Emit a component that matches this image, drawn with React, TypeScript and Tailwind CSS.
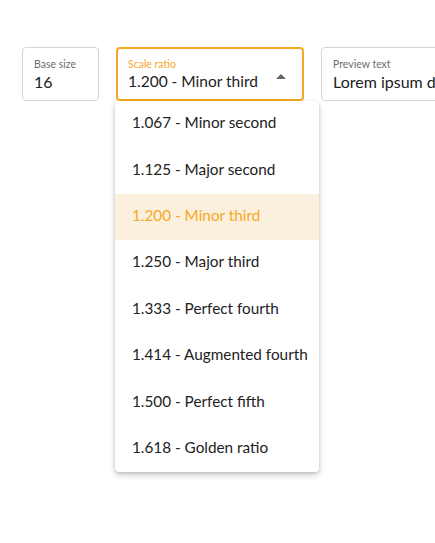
import React from 'react';

const options = [
  '1.067 - Minor second',
  '1.125 - Major second',
  '1.200 - Minor third',
  '1.250 - Major third',
  '1.333 - Perfect fourth',
  '1.414 - Augmented fourth',
  '1.500 - Perfect fifth',
  '1.618 - Golden ratio',
];

const App = () => {
  const selected = '1.200 - Minor third';
  return (
    <div className="w-[435px] h-[543px] overflow-hidden bg-white font-['Lato',sans-serif] text-[#222]">
      <div className="flex pl-[22px] pt-[47px]">
        {/* Base size */}
        <div className="w-[77px] h-[54px] shrink-0 rounded-[4px] border border-[#d6d6d6] px-[11px] pt-[9px]">
          <div className="text-[10.5px] leading-[14px] text-[#6e6e6e]">Base size</div>
          <div className="text-[16px] leading-[21px]">16</div>
        </div>

        {/* Scale ratio select */}
        <div className="relative ml-[17px] w-[188px] h-[54px] shrink-0">
          <div className="h-full rounded-[4px] border-2 border-[#f7a823] pl-[10px] pr-3 pt-[8px] flex">
            <div className="flex-1">
              <div className="text-[10.5px] leading-[14px] text-[#f7a823]">Scale ratio</div>
              <div className="text-[15.5px] leading-[21px]">{selected}</div>
            </div>
            <svg width="10" height="5" viewBox="0 0 10 5" className="mt-[17px] mr-[4px]">
              <path d="M0 5 L5 0 L10 5 Z" fill="#666" />
            </svg>
          </div>

          {/* Dropdown menu */}
          <div className="absolute left-[-1px] top-[54px] w-[204px] bg-white rounded-[4px] shadow-[0_3px_6px_rgba(0,0,0,0.2),0_1px_3px_rgba(0,0,0,0.12)] z-10">
            {options.map((opt) => (
              <div
                key={opt}
                className={
                  opt === selected
                    ? 'h-[46.4px] flex items-center pl-[17px] pb-[3px] text-[15.3px] bg-[#fbf0de] text-[#f7a823]'
                    : 'h-[46.4px] flex items-center pl-[17px] pb-[3px] text-[15.3px] text-[#222]'
                }
              >
                {opt}
              </div>
            ))}
          </div>
        </div>

        {/* Preview text */}
        <div className="ml-[17px] w-[220px] h-[54px] shrink-0 rounded-[4px] border border-[#d6d6d6] px-[11px] pt-[9px]">
          <div className="text-[10.5px] leading-[14px] text-[#6e6e6e]">Preview text</div>
          <div className="text-[16px] leading-[21px] whitespace-nowrap">Lorem ipsum dolor sit amet</div>
        </div>
      </div>
    </div>
  );
};

export default App;
